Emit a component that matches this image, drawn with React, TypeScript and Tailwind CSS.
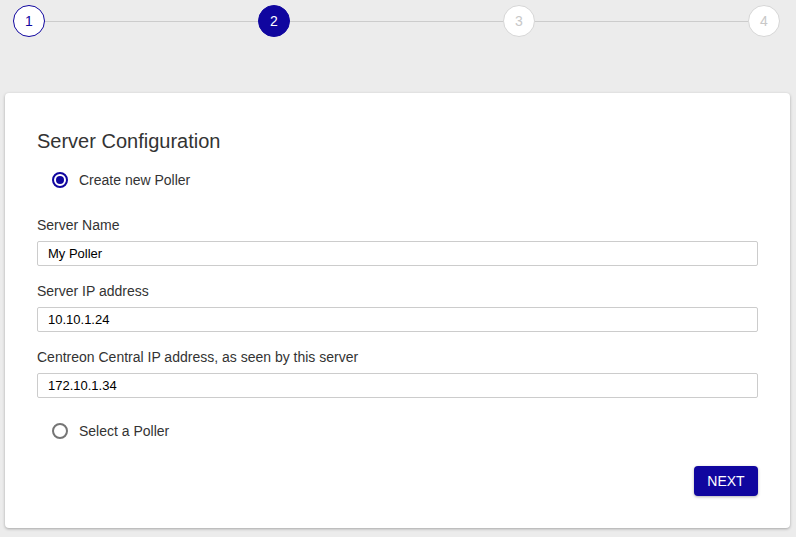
import React from "react";

function Step({ n, state }: { n: number; state: "done" | "active" | "todo" }) {
  const cls =
    state === "active"
      ? "bg-[#10069f] border-[#10069f] text-white"
      : state === "done"
      ? "bg-white border-[#10069f] text-[#10069f]"
      : "bg-white border-[#d6d6d6] text-[#c8c8c8]";
  return (
    <div className={`w-8 h-8 rounded-full border flex items-center justify-center text-[14px] shrink-0 ${cls}`}>
      {n}
    </div>
  );
}

function Line() {
  return <div className="flex-1 h-px bg-[#cccccc]" />;
}

function Radio({ checked, label }: { checked: boolean; label: string }) {
  return (
    <div className="flex items-center pl-[15px] h-[20px]">
      <div
        className={`w-4 h-4 rounded-full border-2 flex items-center justify-center ${
          checked ? "border-[#10069f]" : "border-[#757575]"
        }`}
      >
        {checked && <div className="w-2 h-2 rounded-full bg-[#10069f]" />}
      </div>
      <span className="ml-[11px] text-[14px] text-[#333]">{label}</span>
    </div>
  );
}

function Field({ label, value }: { label: string; value: string }) {
  return (
    <div className="flex flex-col">
      <label className="text-[14px] text-[#333] leading-[16px]">{label}</label>
      <div className="mt-[8px] h-[25px] border border-[#cccccc] rounded-[2px] flex items-center px-[10px] text-[13px] text-black">
        {value}
      </div>
    </div>
  );
}

export default function App() {
  return (
    <div
      className="w-[796px] h-[537px] bg-[#ececec] overflow-hidden"
      style={{ fontFamily: '"Liberation Sans", Arial, sans-serif' }}
    >
      <div className="flex items-center pl-[13px] pr-[16px] pt-[5px]">
        <Step n={1} state="done" />
        <Line />
        <Step n={2} state="active" />
        <Line />
        <Step n={3} state="todo" />
        <Line />
        <Step n={4} state="todo" />
      </div>
      <div className="ml-[5px] mr-[6px] mt-[56px] h-[435px] bg-white rounded-[4px] shadow-[0_1px_3px_rgba(0,0,0,0.3)] px-[32px] pt-[36px] flex flex-col">
        <h2 className="text-[20px] text-[#333] leading-[24px]">Server Configuration</h2>
        <div className="mt-[17px]">
          <Radio checked label="Create new Poller" />
        </div>
        <div className="mt-[27px] flex flex-col gap-[17px]">
          <Field label="Server Name" value="My Poller" />
          <Field label="Server IP address" value="10.10.1.24" />
          <Field label="Centreon Central IP address, as seen by this server" value="172.10.1.34" />
        </div>
        <div className="mt-[23px]">
          <Radio checked={false} label="Select a Poller" />
        </div>
        <div className="flex justify-end mt-[25px]">
          <button className="w-[64px] h-[30px] rounded-[4px] bg-[#10069f] text-white text-[14px] font-medium shadow-[0_1px_3px_rgba(0,0,0,0.3)]">
            NEXT
          </button>
        </div>
      </div>
    </div>
  );
}
